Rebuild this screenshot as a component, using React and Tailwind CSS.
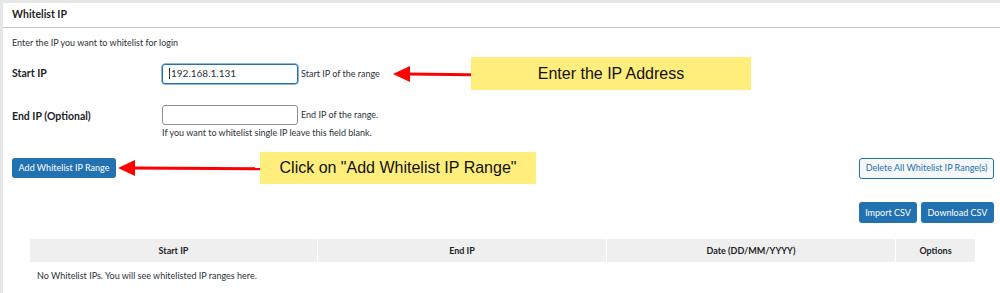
import React from "react";

function Arrow({ width }) {
  return (
    <svg width={width} height="20" viewBox={`0 0 ${width} 20`} className="shrink-0">
      <line x1="14" y1="10" x2={width} y2="10.8" stroke="#ff0000" strokeWidth="3" />
      <polygon points="0,10 17,2 17,18" fill="#ff0000" />
    </svg>
  );
}

function Callout({ text, width, height }) {
  return (
    <div
      className="flex items-center justify-center bg-[#ffee7c] text-[#111] text-[16px] shrink-0"
      style={{ width, height, fontFamily: '"Liberation Sans", Arial, sans-serif' }}
    >
      {text}
    </div>
  );
}

export default function App() {
  const font = { fontFamily: 'Lato, "Open Sans", sans-serif' };
  return (
    <div className="w-[1000px] h-[293px] bg-[#e6e6e6] pt-[3px] pl-[3px] overflow-hidden" style={font}>
      <div className="bg-white h-full text-[#2c3338]">
        <div className="h-[25px] border-b border-[#c3c4c7] flex items-center pl-[9px] text-[10.5px] font-bold text-[#1d2327]">
          Whitelist IP
        </div>
        <div className="pl-[9px] pt-[8px] text-[9px]">Enter the IP you want to whitelist for login</div>

        <div className="flex items-center mt-[7px] h-[34px]">
          <div className="w-[159px] pl-[9px] text-[10.5px] font-bold text-[#1d2327]">Start IP</div>
          <div className="w-[136px] h-[20px] border border-[#2271b1] rounded-[3px] flex items-center pl-[6px] text-[10px] text-[#2c3338] shadow-[0_0_0_0.5px_#2271b1]">
            <span className="w-px h-[11px] bg-[#333] mr-[1px]"></span>192.168.1.131
          </div>
          <div className="ml-[3px] text-[9px] w-[92px]">Start IP of the range</div>
          <Arrow width={78} />
          <Callout text="Enter the IP Address" width={280} height={33} />
        </div>

        <div className="flex mt-[14px]">
          <div className="w-[159px] pl-[9px] text-[10.5px] font-bold text-[#1d2327] pt-[4px]">End IP (Optional)</div>
          <div>
            <div className="flex items-center">
              <div className="w-[136px] h-[20px] border border-[#8c8f94] rounded-[3px]"></div>
              <div className="ml-[3px] text-[9px]">End IP of the range.</div>
            </div>
            <div className="text-[9px] mt-[1px]">If you want to whitelist single IP leave this field blank.</div>
          </div>
        </div>

        <div className="flex items-center mt-[13px] pr-[6px]">
          <button className="ml-[9px] w-[104px] h-[20px] bg-[#2271b1] text-white text-[9px] rounded-[3px] shrink-0 whitespace-nowrap">
            Add Whitelist IP Range
          </button>
          <div className="ml-[2px] flex items-center">
            <Arrow width={142} />
          </div>
          <Callout text={'Click on "Add Whitelist IP Range"'} width={276} height={32} />
          <div className="flex-1"></div>
          <button className="w-[135px] h-[21px] border border-[#2271b1] text-[#2271b1] text-[9px] rounded-[3px] bg-[#f6f7f7] whitespace-nowrap">
            Delete All Whitelist IP Range(s)
          </button>
        </div>

        <div className="flex justify-end gap-[4px] mt-[18px] pr-[6px]">
          <button className="w-[58px] h-[21px] bg-[#2271b1] text-white text-[9px] rounded-[3px] whitespace-nowrap">Import CSV</button>
          <button className="w-[73px] h-[21px] bg-[#2271b1] text-white text-[9px] rounded-[3px] whitespace-nowrap">Download CSV</button>
        </div>

        <div className="ml-[27px] mr-[25px] mt-[16px]">
          <div className="grid grid-cols-[287px_288px_288px_1fr] gap-x-[1px] text-[9px] font-bold text-[#1d2327]">
            <div className="bg-[#efefef] h-[23px] flex items-center justify-center">Start IP</div>
            <div className="bg-[#efefef] h-[23px] flex items-center justify-center">End IP</div>
            <div className="bg-[#efefef] h-[23px] flex items-center justify-center">Date (DD/MM/YYYY)</div>
            <div className="bg-[#efefef] h-[23px] flex items-center justify-center">Options</div>
          </div>
          <div className="pl-[7px] pt-[7px] text-[9px]">No Whitelist IPs. You will see whitelisted IP ranges here.</div>
        </div>
      </div>
    </div>
  );
}
